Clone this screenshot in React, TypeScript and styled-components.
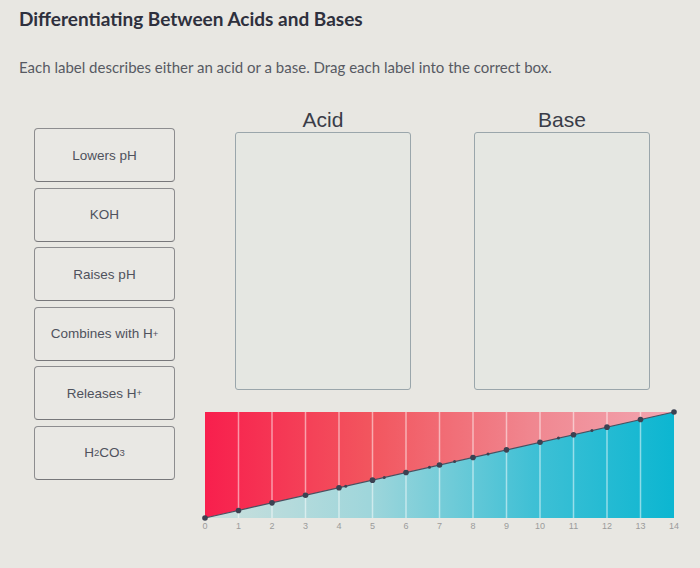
import React from "react";
import styled, { createGlobalStyle } from "styled-components";

const GlobalStyle = createGlobalStyle`
  html, body {
    margin: 0;
    padding: 0;
    background: #e8e7e2;
  }
`;

const Page = styled.div`
  width: 700px;
  height: 568px;
  box-sizing: border-box;
  padding: 8px 0 0 19px;
  background: #e8e7e2;
  font-family: "Lato", "Liberation Sans", sans-serif;
  overflow: hidden;
`;

const Title = styled.h1`
  margin: 0;
  font-size: 19px;
  line-height: 22px;
  font-weight: 700;
  color: #2e303d;
`;

const Instructions = styled.p`
  margin: 28px 0 0;
  font-size: 15px;
  line-height: 18px;
  color: #575a62;
`;

const Workspace = styled.div`
  display: grid;
  grid-template-columns: 141px 469px;
  column-gap: 30px;
  margin: 32px 0 0 15px;
`;

const LabelList = styled.div`
  display: flex;
  flex-direction: column;
  gap: 5.6px;
  padding-top: 20px;
`;

const Label = styled.div`
  height: 54px;
  box-sizing: border-box;
  display: flex;
  align-items: center;
  justify-content: center;
  border: 1px solid #8d8d8f;
  border-bottom-color: #77777a;
  border-radius: 4px;
  background: #e9e8e4;
  font-family: "Liberation Sans", Arial, sans-serif;
  font-size: 13.5px;
  color: #4f525d;

  sup, sub {
    font-size: 9.5px;
    line-height: 0;
  }
  sup {
    vertical-align: 5px;
  }
  sub {
    vertical-align: -2px;
  }
`;

const RightSide = styled.div`
  display: flex;
  flex-direction: column;
`;

const BinRow = styled.div`
  display: flex;
  gap: 63px;
  padding-left: 30px;
`;

const Bin = styled.div`
  width: 176px;
  display: flex;
  flex-direction: column;
`;

const BinHeading = styled.div`
  text-align: center;
  font-family: "Liberation Sans", Arial, sans-serif;
  font-size: 21px;
  line-height: 24px;
  color: #3a3d48;
`;

const DropZone = styled.div`
  height: 256px;
  border: 1px solid #9aa6ab;
  border-radius: 3px;
  background: #e5e7e2;
`;

const ChartWrap = styled.div`
  margin-top: 22px;
  width: 469px;

  svg {
    display: block;
    overflow: visible;
  }
`;

const W = 469;
const H = 106;
const halfDots = [4.2, 5.35, 6.7, 7.45, 8.45, 10.55, 11.55];

function PhChart() {
  const ticks = Array.from({ length: 15 }, (_, i) => i);
  const px = (v: number) => (v * W) / 14;
  const py = (v: number) => H - (v * H) / 14;
  return (
    <svg width={W} height={H + 14} viewBox={`0 0 ${W} ${H + 14}`}>
      <defs>
        <linearGradient id="acidFill" x1="0" y1="0" x2="1" y2="0">
          <stop offset="0" stopColor="#f81f4d" />
          <stop offset="0.35" stopColor="#f2555e" />
          <stop offset="0.7" stopColor="#f08790" />
          <stop offset="1" stopColor="#f2a6b1" />
        </linearGradient>
        <linearGradient id="baseFill" x1="0" y1="0" x2="1" y2="0">
          <stop offset="0" stopColor="#cce0dd" />
          <stop offset="0.35" stopColor="#9fd6db" />
          <stop offset="0.7" stopColor="#3fc0d5" />
          <stop offset="1" stopColor="#0cb6d1" />
        </linearGradient>
      </defs>
      <polygon points={`0,0 ${W},0 0,${H}`} fill="url(#acidFill)" />
      <polygon points={`0,${H} ${W},0 ${W},${H}`} fill="url(#baseFill)" />
      {ticks.slice(1, 14).map((t) => (
        <line
          key={t}
          x1={px(t)}
          x2={px(t)}
          y1={0}
          y2={H}
          stroke="#ffffff"
          strokeOpacity={0.5}
          strokeWidth={1.5}
        />
      ))}
      <line x1={0} y1={H} x2={W} y2={0} stroke="#4a5060" strokeWidth={1.2} />
      {halfDots.map((t) => (
        <circle key={t} cx={px(t)} cy={py(t)} r={1.5} fill="#3c4252" />
      ))}
      {ticks.map((t) => (
        <circle key={t} cx={px(t)} cy={py(t)} r={2.8} fill="#3c4252" />
      ))}
      {ticks.map((t) => (
        <text
          key={t}
          x={px(t)}
          y={H + 11}
          textAnchor="middle"
          fontSize="9"
          fontFamily="Liberation Sans, Arial, sans-serif"
          fill="#9b9b9b"
        >
          {t}
        </text>
      ))}
    </svg>
  );
}

export default function App() {
  return (
    <Page>
      <GlobalStyle />
      <Title>Differentiating Between Acids and Bases</Title>
      <Instructions>
        Each label describes either an acid or a base. Drag each label into the correct box.
      </Instructions>
      <Workspace>
        <LabelList>
          <Label>Lowers pH</Label>
          <Label>KOH</Label>
          <Label>Raises pH</Label>
          <Label>
            Combines with H<sup>+</sup>
          </Label>
          <Label>
            Releases H<sup>+</sup>
          </Label>
          <Label>
            H<sub>2</sub>CO<sub>3</sub>
          </Label>
        </LabelList>
        <RightSide>
          <BinRow>
            <Bin>
              <BinHeading>Acid</BinHeading>
              <DropZone />
            </Bin>
            <Bin>
              <BinHeading>Base</BinHeading>
              <DropZone />
            </Bin>
          </BinRow>
          <ChartWrap>
            <PhChart />
          </ChartWrap>
        </RightSide>
      </Workspace>
    </Page>
  );
}
